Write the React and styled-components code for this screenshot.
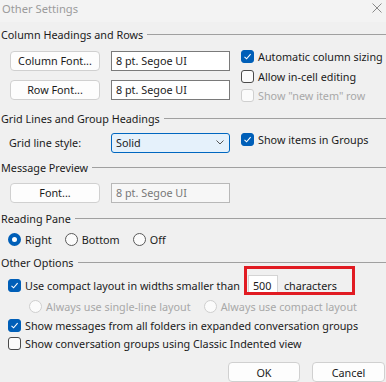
import styled, { createGlobalStyle } from "styled-components";

const Global = createGlobalStyle`
  html, body {
    margin: 0;
    padding: 0;
    background: #f0f0f0;
  }
  body {
    font-family: "Noto Sans", "Open Sans", sans-serif;
    font-size: 10.8px;
    color: #1b1b1b;
  }
`;

const Dialog = styled.div`
  position: relative;
  width: 386px;
  height: 382px;
  overflow: hidden;
  background: #f0f0f0;
  display: flex;
  flex-direction: column;
`;

const TitleBar = styled.div`
  height: 22px;
  flex-shrink: 0;
  background: #f3f3f3;
  display: flex;
  align-items: center;
  justify-content: space-between;
  padding: 0 4px 6px 2px;
  box-sizing: border-box;
  color: #9b9b9b;
  font-size: 11.2px;
`;

const Header = styled.div`
  height: 16px;
  margin-top: ${(p) => p.$mt || 0}px;
  display: flex;
  align-items: center;
  gap: 4px;
  padding-left: 1px;
  white-space: nowrap;

  &::after {
    content: "";
    flex: 1;
    height: 1px;
    background: #a0a0a0;
  }
`;

const Row = styled.div`
  display: flex;
  align-items: ${(p) => p.$align || "center"};
  margin-top: ${(p) => p.$mt || 0}px;
  padding-left: ${(p) => p.$pl || 0}px;
  gap: ${(p) => p.$gap || 0}px;
`;

const Column = styled.div`
  display: flex;
  flex-direction: column;
  gap: ${(p) => p.$gap || 0}px;
  margin-left: ${(p) => p.$ml || 0}px;
`;

const Button = styled.div`
  width: ${(p) => p.$w || 90}px;
  height: 20px;
  box-sizing: border-box;
  border: 1px solid #d0d0d0;
  border-radius: 4px;
  background: #fdfdfd;
  display: flex;
  align-items: center;
  justify-content: center;
`;

const Field = styled.div`
  width: 119px;
  height: 20px;
  box-sizing: border-box;
  border: 1px solid ${(p) => (p.$disabled ? "#b8b8b8" : "#7a7a7a")};
  background: ${(p) => (p.$disabled ? "#f7f7f7" : "#ffffff")};
  color: ${(p) => (p.$disabled ? "#777" : "#1b1b1b")};
  margin-left: 11px;
  padding-left: 4px;
  display: flex;
  align-items: center;
`;

const Select = styled(Field)`
  background: #e5f1fb;
  border-color: #0067c0;
  border-radius: 3px;
  justify-content: space-between;
  padding-right: 5px;
`;

const Option = styled.label`
  display: flex;
  align-items: center;
  gap: 4px;
  height: ${(p) => p.$h || 16}px;
  white-space: nowrap;
  color: ${(p) => (p.$disabled ? "#a8a8a8" : "#1b1b1b")};
`;

const Box = styled.span`
  width: 13px;
  height: 13px;
  box-sizing: border-box;
  border-radius: 3px;
  flex-shrink: 0;
  display: flex;
  align-items: center;
  justify-content: center;
  background: ${(p) => (p.$checked ? "#005fb8" : "#fbfbfb")};
  border: 1px solid
    ${(p) => (p.$checked ? "#005fb8" : p.$disabled ? "#cfcfcf" : "#4a4a4a")};
`;

const Radio = styled.span`
  width: 13px;
  height: 13px;
  box-sizing: border-box;
  border-radius: 50%;
  flex-shrink: 0;
  background: ${(p) => (p.$checked ? "#fff" : "#fbfbfb")};
  border: ${(p) =>
    p.$checked
      ? "4px solid #005fb8"
      : p.$disabled
      ? "1px solid #cfcfcf"
      : "1px solid #5a5a5a"};
`;

const Footer = styled.div`
  display: flex;
  justify-content: flex-end;
  gap: 12px;
  margin-top: 11px;
  padding-right: 1px;
`;

const Highlight = styled.div`
  position: absolute;
  left: 244px;
  top: 266px;
  width: 111px;
  height: 29px;
  box-sizing: border-box;
  border: 3px solid #e11b22;
  pointer-events: none;
`;

const SmallInput = styled.span`
  width: 30px;
  height: 20px;
  box-sizing: border-box;
  background: #fff;
  border: 1px solid #d4d4d4;
  display: inline-flex;
  align-items: center;
  padding-left: 4px;
  margin: 0 2px 0 4px;
`;

const Check = () => (
  <svg width="9" height="9" viewBox="0 0 9 9">
    <path d="M1.5 4.8 L3.6 6.8 L7.6 2.2" fill="none" stroke="#fff" strokeWidth="1.1" />
  </svg>
);

const CheckBox = ({ checked, disabled, children, h }) => (
  <Option $disabled={disabled} $h={h}>
    <Box $checked={checked} $disabled={disabled}>
      {checked && <Check />}
    </Box>
    {children}
  </Option>
);

const RadioItem = ({ checked, disabled, children }) => (
  <Option $disabled={disabled}>
    <Radio $checked={checked} $disabled={disabled} />
    {children}
  </Option>
);

const App = () => (
  <>
    <Global />
    <Dialog>
      <TitleBar>
        <span>Other Settings</span>
        <svg width="10" height="10" viewBox="0 0 10 10">
          <path d="M0.5 0.5 L9.5 9.5 M9.5 0.5 L0.5 9.5" stroke="#8a8a8a" strokeWidth="1" />
        </svg>
      </TitleBar>

      <Header $mt={5}>Column Headings and Rows</Header>
      <Row $align="flex-start" $pl={10} $mt={4}>
        <Column $gap={9} style={{ paddingTop: 4 }}>
          <Row>
            <Button>Column Font...</Button>
            <Field>8 pt. Segoe UI</Field>
          </Row>
          <Row>
            <Button>Row Font...</Button>
            <Field>8 pt. Segoe UI</Field>
          </Row>
        </Column>
        <Column $ml={11}>
          <CheckBox checked h={20}>Automatic column sizing</CheckBox>
          <CheckBox h={19}>Allow in-cell editing</CheckBox>
          <CheckBox disabled h={20}>Show "new item" row</CheckBox>
        </Column>
      </Row>

      <Header $mt={5}>Grid Lines and Group Headings</Header>
      <Row $align="flex-start" $pl={9} $mt={6}>
        <Option $h={20} style={{ width: 91 }}>Grid line style:</Option>
        <Select>
          <span>Solid</span>
          <svg width="8" height="5" viewBox="0 0 8 5">
            <path d="M0.5 0.5 L4 4 L7.5 0.5" fill="none" stroke="#555" strokeWidth="1" />
          </svg>
        </Select>
        <Column $ml={11}>
          <CheckBox checked h={13}>Show items in Groups</CheckBox>
        </Column>
      </Row>

      <Header $mt={7}>Message Preview</Header>
      <Row $pl={10} $mt={7}>
        <Button>Font...</Button>
        <Field $disabled>8 pt. Segoe UI</Field>
      </Row>

      <Header $mt={8}>Reading Pane</Header>
      <Row $pl={8} $gap={13} $mt={5}>
        <RadioItem checked>Right</RadioItem>
        <RadioItem>Bottom</RadioItem>
        <RadioItem>Off</RadioItem>
      </Row>

      <Header $mt={7}>Other Options</Header>
      <Row $pl={8} $mt={5} style={{ height: 20 }}>
        <CheckBox checked>
          Use compact layout in widths smaller than
          <SmallInput>500</SmallInput>
          characters
        </CheckBox>
      </Row>
      <Row $pl={29} $gap={13} $mt={3}>
        <RadioItem disabled>Always use single-line layout</RadioItem>
        <RadioItem disabled>Always use compact layout</RadioItem>
      </Row>
      <Row $pl={8} $mt={3}>
        <CheckBox checked>Show messages from all folders in expanded conversation groups</CheckBox>
      </Row>
      <Row $pl={8} $mt={2}>
        <CheckBox>Show conversation groups using Classic Indented view</CheckBox>
      </Row>

      <Footer>
        <Button $w={72}>OK</Button>
        <Button $w={73}>Cancel</Button>
      </Footer>

      <Highlight />
    </Dialog>
  </>
);

export default App;
